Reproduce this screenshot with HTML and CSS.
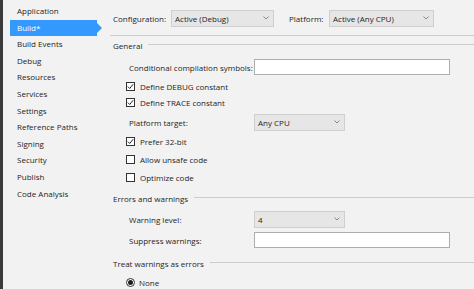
FILE: index.html
```html
<!DOCTYPE html>
<html>
<head>
<meta charset="utf-8">
<link rel="stylesheet" href="styles.css">
</head>
<body>
<div class="app">
  <div class="edge"></div>
  <nav class="nav">
    <div class="item">Application</div>
    <div class="item active">Build*</div>
    <div class="item">Build Events</div>
    <div class="item">Debug</div>
    <div class="item">Resources</div>
    <div class="item">Services</div>
    <div class="item">Settings</div>
    <div class="item">Reference Paths</div>
    <div class="item">Signing</div>
    <div class="item">Security</div>
    <div class="item">Publish</div>
    <div class="item">Code Analysis</div>
  </nav>
  <main class="main">
    <div class="topbar">
      <span class="lbl cfg-lbl">Configuration:</span>
      <div class="combo cfg-combo"><span>Active (Debug)</span><svg class="chev" width="6" height="4" viewBox="0 0 6 4"><polyline points="0.5,0.5 3,3 5.5,0.5" fill="none" stroke="#8a8a8a" stroke-width="1"/></svg></div>
      <span class="lbl plat-lbl">Platform:</span>
      <div class="combo plat-combo"><span>Active (Any CPU)</span><svg class="chev" width="6" height="4" viewBox="0 0 6 4"><polyline points="0.5,0.5 3,3 5.5,0.5" fill="none" stroke="#8a8a8a" stroke-width="1"/></svg></div>
    </div>

    <div class="section s-general"><span>General</span><div class="rule"></div></div>

    <div class="row field r-cond"><span class="flabel">Conditional compilation symbols:</span><div class="textbox"></div></div>
    <div class="row check r-debug"><span class="box checked"><svg width="7" height="7" viewBox="0 0 7 7"><polyline points="0.8,3.6 2.7,5.5 6.2,1.2" fill="none" stroke="#222" stroke-width="1"/></svg></span><span>Define DEBUG constant</span></div>
    <div class="row check r-trace"><span class="box checked"><svg width="7" height="7" viewBox="0 0 7 7"><polyline points="0.8,3.6 2.7,5.5 6.2,1.2" fill="none" stroke="#222" stroke-width="1"/></svg></span><span>Define TRACE constant</span></div>
    <div class="row field r-pt"><span class="flabel">Platform target:</span><div class="combo small-combo"><span>Any CPU</span><svg class="chev" width="6" height="4" viewBox="0 0 6 4"><polyline points="0.5,0.5 3,3 5.5,0.5" fill="none" stroke="#8a8a8a" stroke-width="1"/></svg></div></div>
    <div class="row check r-prefer"><span class="box checked"><svg width="7" height="7" viewBox="0 0 7 7"><polyline points="0.8,3.6 2.7,5.5 6.2,1.2" fill="none" stroke="#222" stroke-width="1"/></svg></span><span>Prefer 32-bit</span></div>
    <div class="row check r-unsafe"><span class="box"></span><span>Allow unsafe code</span></div>
    <div class="row check r-opt"><span class="box"></span><span>Optimize code</span></div>

    <div class="section s-errors"><span>Errors and warnings</span><div class="rule"></div></div>
    <div class="row field r-wl"><span class="flabel">Warning level:</span><div class="combo small-combo"><span>4</span><svg class="chev" width="6" height="4" viewBox="0 0 6 4"><polyline points="0.5,0.5 3,3 5.5,0.5" fill="none" stroke="#8a8a8a" stroke-width="1"/></svg></div></div>
    <div class="row field r-sup"><span class="flabel">Suppress warnings:</span><div class="textbox"></div></div>

    <div class="section s-treat"><span>Treat warnings as errors</span><div class="rule"></div></div>
    <div class="row check r-none"><span class="radio"><span class="dot"></span></span><span>None</span></div>
  </main>
</div>
</body>
</html>
```
FILE: styles.css
```css
html, body {
  margin: 0;
  padding: 0;
  background: #f2f2f2;
  overflow: hidden;
}
body {
  width: 474px;
  height: 289px;
  font-family: "Open Sans", "Noto Sans", sans-serif;
  font-size: 8px;
  color: #1e1e1e;
}
.app {
  display: flex;
  height: 289px;
}
.edge {
  width: 3px;
  background: #3a3a3c;
  flex: none;
}
.nav {
  width: 100px;
  flex: none;
  padding-top: 3px;
  box-sizing: border-box;
}
.item {
  position: relative;
  margin-left: 7px;
  width: 87px;
  height: 16.6px;
  line-height: 16.6px;
  padding-left: 7px;
  box-sizing: border-box;
  white-space: nowrap;
}
.item.active {
  background: #3399ff;
  color: #fff;
}
.item.active::after {
  content: "";
  position: absolute;
  right: -5px;
  top: 3.3px;
  border-top: 5px solid transparent;
  border-bottom: 5px solid transparent;
  border-left: 5px solid #3399ff;
}
.main {
  flex: 1;
  margin-left: 7px;
  min-width: 0;
}
.topbar {
  height: 36px;
  border-bottom: 1px solid #cdcdcd;
  display: flex;
  align-items: center;
  padding-left: 3px;
  padding-top: 1px;
  box-sizing: border-box;
}
.lbl { white-space: nowrap; }
.cfg-lbl { width: 58px; flex: none; }
.plat-lbl { width: 40px; flex: none; margin-left: 15px; }
.combo {
  height: 17px;
  box-sizing: border-box;
  background: #e6e6e6;
  border: 1px solid #cfcfcf;
  display: flex;
  align-items: center;
  justify-content: space-between;
  padding: 0 4px 0 3px;
  flex: none;
  white-space: nowrap;
}
.cfg-combo { width: 103px; }
.plat-combo { width: 105px; }
.small-combo { width: 91px; }
.chev { display: block; }
.section {
  height: 18px;
  display: flex;
  align-items: center;
  padding-left: 3px;
  white-space: nowrap;
}
.section .rule {
  flex: 1;
  height: 1px;
  background: #cdcdcd;
  margin-left: 6px;
  margin-top: -1px;
}
.row {
  display: flex;
  align-items: center;
  height: 18px;
  white-space: nowrap;
}
.field { padding-left: 19px; }
.flabel { width: 125px; flex: none; }
.textbox {
  width: 196px;
  height: 16px;
  box-sizing: border-box;
  background: #fff;
  border: 1px solid #adadad;
}
.check { padding-left: 16px; }
.box {
  width: 9px;
  height: 9px;
  box-sizing: border-box;
  border: 1px solid #333;
  background: #fff;
  margin-right: 5px;
  display: flex;
  align-items: center;
  justify-content: center;
  flex: none;
}
.radio {
  width: 9px;
  height: 9px;
  box-sizing: border-box;
  border: 1px solid #333;
  border-radius: 50%;
  background: #fff;
  margin-right: 4px;
  display: flex;
  align-items: center;
  justify-content: center;
  flex: none;
}
.radio .dot {
  width: 5px;
  height: 5px;
  border-radius: 50%;
  background: #1e1e1e;
}
.s-general { margin-top: 0; }
.r-cond { margin-top: 4px; }
.r-debug { height: 16px; margin-top: 2px; }
.r-trace { height: 16px; }
.r-pt { margin-top: 3px; }
.r-prefer { margin-top: 1px; }
.s-errors { margin-top: 3px; }
.r-wl { margin-top: 3px; }
.r-sup { margin-top: 3px; }
.s-treat { margin-top: 5px; }
.r-none { margin-top: 1px; }
```
